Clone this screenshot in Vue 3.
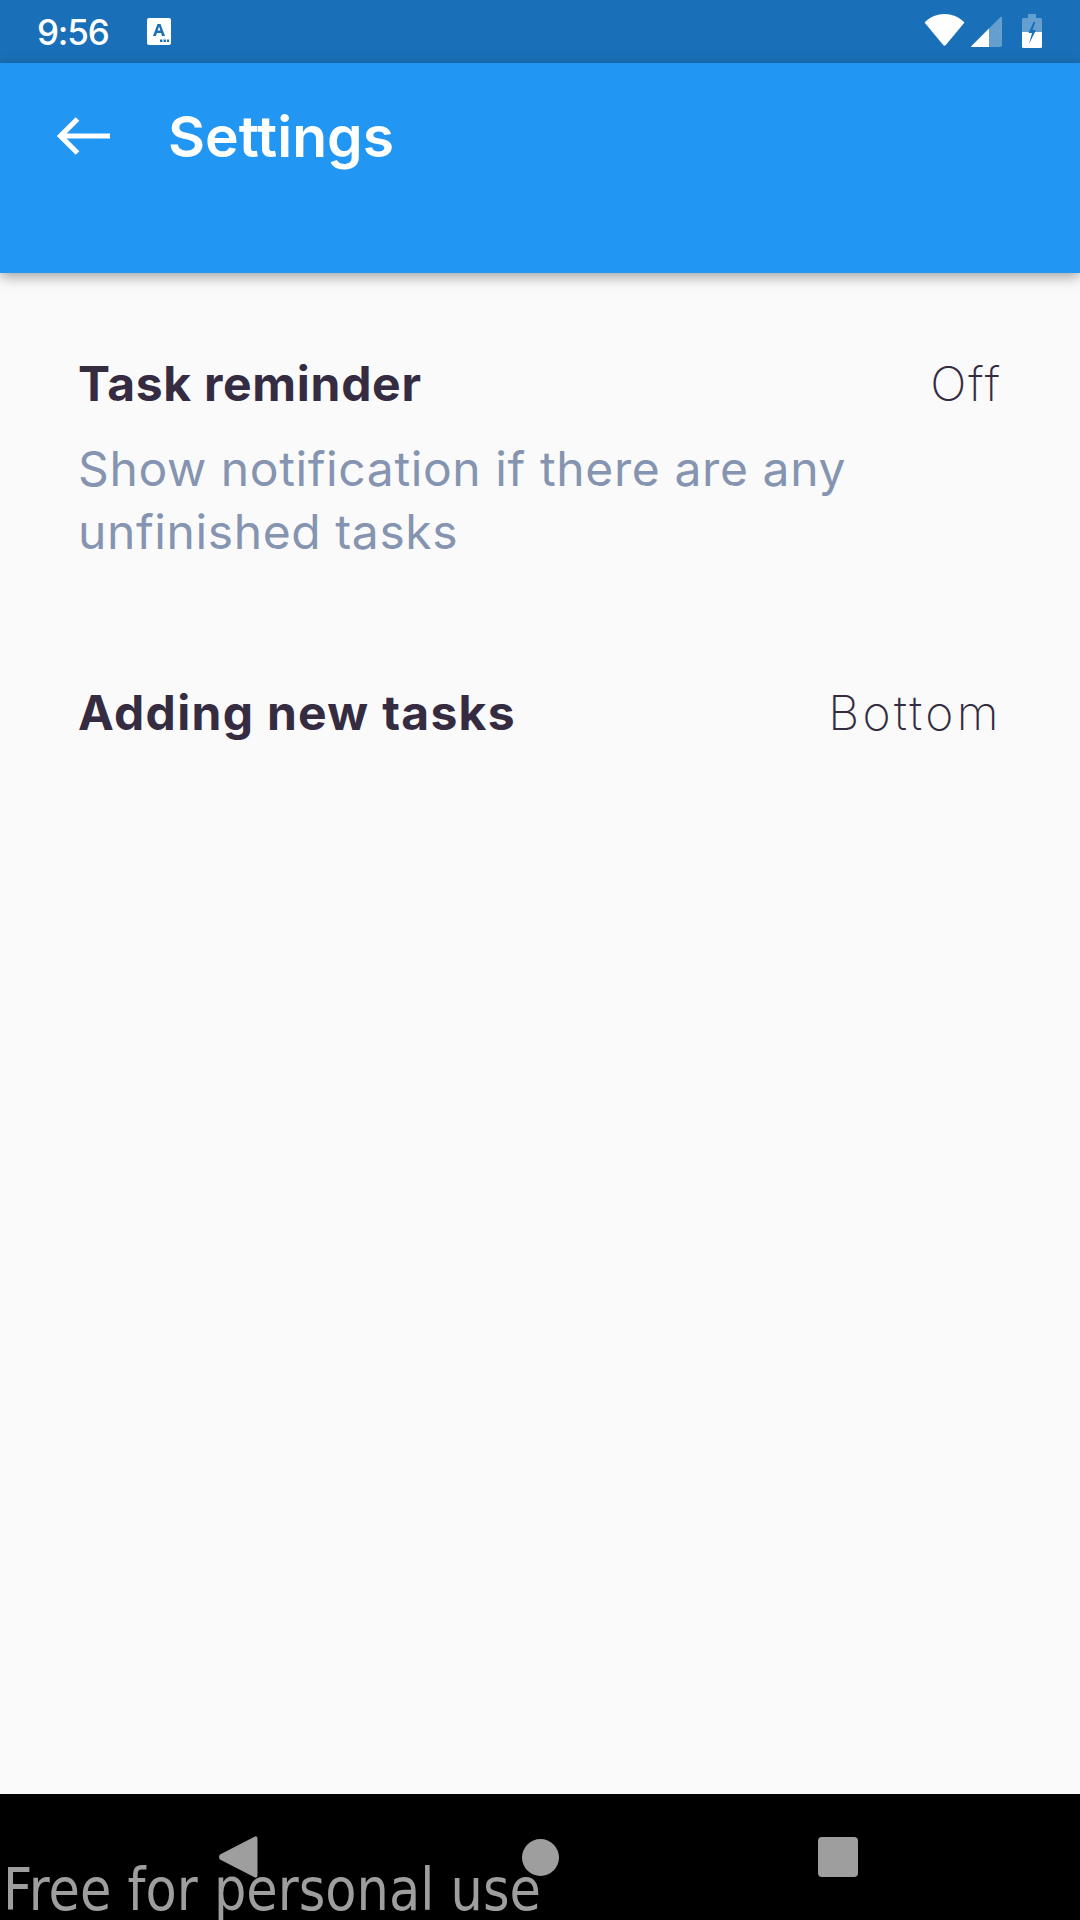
<template>
  <div class="screen">
    <div class="status-bar">
      <span class="clock">9:56</span>
      <svg class="keyboard-icon" width="24" height="27" viewBox="0 0 24 27" aria-hidden="true">
        <rect width="24" height="27" rx="2" fill="#fff" />
        <path d="M6 18 L10.500 6 H13.500 L18 18 H15 L14.200 15 H9.800 L9 18 Z M10.600 12.400 H13.400 L12 8.500 Z" fill="#1a70b8" fill-rule="evenodd" />
        <path d="M13 21.500h2.400v2.400H13zM16.600 21.500H19v2.400h-2.400zM20 21.500h2v2.400h-2z" fill="#1a70b8" />
      </svg>
      <span class="spacer"></span>
      <svg class="wifi-icon" width="41" height="32" viewBox="0 0 41 32" aria-hidden="true">
        <path d="M0.500 8.500 C12 -2.800 29 -2.800 40.500 8.500 L22 30.800 C21 32 20 32 19 30.800 Z" fill="#fff" />
      </svg>
      <svg class="signal-icon" width="31" height="31" viewBox="0 0 31 31" aria-hidden="true">
        <path d="M0 30.500 L29.500 1 Q31 0 31 2 V29 Q31 31 29 31 H0.500 Z" fill="#fff" fill-opacity=".33" />
        <path d="M0 30.500 L18 12.500 V31 H0.500 Z" fill="#fff" />
      </svg>
      <svg class="battery-icon" width="20" height="34" viewBox="0 0 20 34" aria-hidden="true">
        <path d="M6 0h8v4h4.500q1.500 0 1.500 1.500V18H0V5.500Q0 4 1.500 4H6z" fill="#fff" fill-opacity=".33" />
        <path d="M0 18h20v14.500q0 1.500-1.500 1.500h-17Q0 34 0 32.500z" fill="#fff" />
        <path d="M11.500 8 L6.500 19 H10 L7 30 L14 16 H10.500 L13.500 8 Z" fill="#1a70b8" />
      </svg>
    </div>

    <header class="app-bar">
      <svg class="back-icon" width="54" height="38" viewBox="0 0 54 38" aria-hidden="true">
        <path d="M53 19H4M20.500 2 L3.500 19 L20.500 36" fill="none" stroke="#fff" stroke-width="5.200" />
      </svg>
      <h1 class="title">Settings</h1>
    </header>

    <main class="content">
      <div v-for="setting in settings" :key="setting.title" :class="['setting', { 'setting-wide': !setting.hint }]">
        <div class="setting-row">
          <span class="setting-title">{{ setting.title }}</span>
          <span class="setting-value">{{ setting.value }}</span>
        </div>
        <p v-if="setting.hint" class="setting-hint">{{ setting.hint }}</p>
      </div>
    </main>

    <nav class="nav-bar">
      <svg class="nav-back" width="39" height="42" viewBox="0 0 39 42" aria-hidden="true">
        <path d="M1 18.500 L35 1 Q38.500 -1 38.500 3 V39 Q38.500 43 35 41 L1 23.500 Q-1 21 1 18.500 Z" fill="#9e9e9e" />
      </svg>
      <span class="nav-home"></span>
      <span class="nav-recent"></span>
      <span class="watermark">Free for personal use</span>
    </nav>
  </div>
</template>

<script setup>
const settings = [
  {
    title: 'Task reminder',
    value: 'Off',
    hint: 'Show notification if there are any unfinished tasks'
  },
  { title: 'Adding new tasks', value: 'Bottom' }
]
</script>

<style>
html,
body {
  margin: 0;
  background: #fafafa;
}
</style>

<style scoped>
.screen {
  display: flex;
  flex-direction: column;
  width: 1080px;
  height: 1920px;
  overflow: hidden;
  background: #fafafa;
  font-family: Inter, "Noto Sans", sans-serif;
}

.status-bar {
  display: flex;
  align-items: flex-start;
  flex: 0 0 63px;
  box-sizing: border-box;
  padding: 0 38px 0 37px;
  background: #1a70b8;
  color: #fff;
}

.clock {
  margin-top: 12px;
  font-size: 35px;
  line-height: 40px;
  font-weight: 500;
  letter-spacing: -1.200px;
}

.keyboard-icon {
  margin: 18px 0 0 38px;
}

.spacer {
  flex: 1;
}

.wifi-icon {
  margin-top: 14px;
}

.signal-icon {
  margin: 16px 0 0 6px;
}

.battery-icon {
  margin: 14px 0 0 20px;
}

.app-bar {
  position: relative;
  z-index: 1;
  display: flex;
  align-items: flex-start;
  flex: 0 0 210px;
  box-sizing: border-box;
  padding: 0 0 0 57px;
  background: #2196f3;
  box-shadow: 0 4px 12px rgba(0, 0, 0, 0.35);
}

.back-icon {
  margin: 54px 0 0 0;
}

.title {
  margin: 34px 0 0 57px;
  font-size: 57px;
  line-height: 80px;
  font-weight: 600;
  color: #fff;
}

.content {
  flex: 1;
  padding: 79px 78px 0;
}

.setting {
  margin-bottom: 118px;
}

.setting-row {
  display: flex;
  justify-content: space-between;
  align-items: baseline;
}

.setting-title {
  font-size: 48px;
  line-height: 64px;
  font-weight: 700;
  letter-spacing: 0.700px;
  color: #352c42;
}

.setting-value {
  font-size: 48px;
  line-height: 64px;
  font-weight: 200;
  letter-spacing: 2px;
  color: #352c42;
}

.setting-wide .setting-title {
  letter-spacing: 1.300px;
}

.setting-wide .setting-value {
  letter-spacing: 3.400px;
}

.setting-hint {
  margin: 21px 0 0;
  font-size: 48px;
  line-height: 63px;
  letter-spacing: 0.600px;
  color: #8594b0;
}

.nav-bar {
  position: relative;
  display: flex;
  flex: 0 0 126px;
  background: #000;
  overflow: hidden;
}

.nav-back {
  position: absolute;
  left: 219px;
  top: 42px;
}

.nav-home {
  position: absolute;
  left: 522px;
  top: 45px;
  width: 37px;
  height: 37px;
  border-radius: 50%;
  background: #9e9e9e;
}

.nav-recent {
  position: absolute;
  left: 818px;
  top: 43px;
  width: 40px;
  height: 40px;
  border-radius: 4px;
  background: #9e9e9e;
}

.watermark {
  position: absolute;
  left: 3px;
  top: 62px;
  font-family: "DejaVu Sans", sans-serif;
  font-size: 58px;
  line-height: 68px;
  color: #9e9e9e;
  white-space: nowrap;
  transform: scaleX(0.88);
  transform-origin: left top;
}
</style>
